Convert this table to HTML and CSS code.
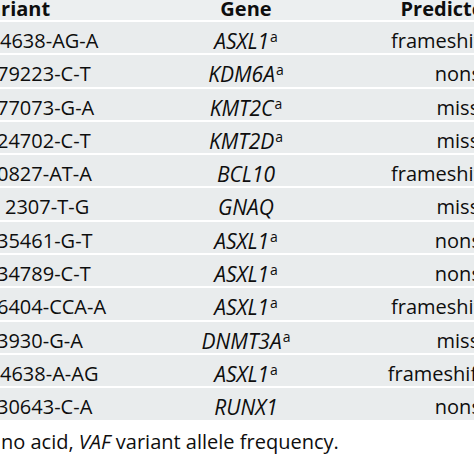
FILE: index.html
```html
<!DOCTYPE html>
<html lang="en">
<head>
<meta charset="utf-8">
<title>Variants table</title>
<link rel="stylesheet" href="styles.css">
</head>
<body>
<div class="frame">
  <div class="table">
    <div class="row head">
      <div class="c-var ind-head">Variant</div>
      <div class="c-gene">Gene</div>
      <div class="c-pred">Predicted effect</div>
    </div>
    <div class="row">
      <div class="c-var ind-0">4638-AG-A</div>
      <div class="c-gene"><i>ASXL1</i><sup>a</sup></div>
      <div class="c-pred">frameshift deletion</div>
    </div>
    <div class="row">
      <div class="c-var">79223-C-T</div>
      <div class="c-gene"><i>KDM6A</i><sup>a</sup></div>
      <div class="c-pred">nonsense</div>
    </div>
    <div class="row">
      <div class="c-var">77073-G-A</div>
      <div class="c-gene"><i>KMT2C</i><sup>a</sup></div>
      <div class="c-pred">missense</div>
    </div>
    <div class="row">
      <div class="c-var">24702-C-T</div>
      <div class="c-gene"><i>KMT2D</i><sup>a</sup></div>
      <div class="c-pred">missense</div>
    </div>
    <div class="row">
      <div class="c-var">0827-AT-A</div>
      <div class="c-gene"><i>BCL10</i></div>
      <div class="c-pred">frameshift deletion</div>
    </div>
    <div class="row">
      <div class="c-var ind-5">2307-T-G</div>
      <div class="c-gene"><i>GNAQ</i></div>
      <div class="c-pred">missense</div>
    </div>
    <div class="row">
      <div class="c-var">35461-G-T</div>
      <div class="c-gene"><i>ASXL1</i><sup>a</sup></div>
      <div class="c-pred">nonsense</div>
    </div>
    <div class="row">
      <div class="c-var">34789-C-T</div>
      <div class="c-gene"><i>ASXL1</i><sup>a</sup></div>
      <div class="c-pred">nonsense</div>
    </div>
    <div class="row">
      <div class="c-var">6404-CCA-A</div>
      <div class="c-gene"><i>ASXL1</i><sup>a</sup></div>
      <div class="c-pred">frameshift deletion</div>
    </div>
    <div class="row">
      <div class="c-var">3930-G-A</div>
      <div class="c-gene"><i>DNMT3A</i><sup>a</sup></div>
      <div class="c-pred">missense</div>
    </div>
    <div class="row">
      <div class="c-var ind-0">4638-A-AG</div>
      <div class="c-gene"><i>ASXL1</i><sup>a</sup></div>
      <div class="c-pred">frameshift insertion</div>
    </div>
    <div class="row">
      <div class="c-var">30643-C-A</div>
      <div class="c-gene"><i>RUNX1</i></div>
      <div class="c-pred">nonsense</div>
    </div>
  </div>
  <p class="note">no acid, <i>VAF</i> variant allele frequency.</p>
</div>
</body>
</html>
```

FILE: styles.css
```css
html, body {
  margin: 0;
  padding: 0;
  background: #ffffff;
  overflow: hidden;
}

.frame {
  width: 474px;
  height: 474px;
  overflow: hidden;
  font-family: "Open Sans", "Noto Sans", sans-serif;
  font-size: 20px;
  color: #0e0e0e;
}

.table {
  width: 636px;
  display: flex;
  flex-direction: column;
  gap: 2px;
}

.row {
  display: grid;
  grid-template-columns: 170px 150px 316px;
  height: 31.3px;
  box-sizing: border-box;
  padding-top: 5px;
  line-height: 28px;
  background: #e9eced;
  white-space: nowrap;
}

.row.head {
  height: 20px;
  padding-top: 0;
  line-height: 18px;
  font-weight: 700;
  background: #eceff0;
}

.c-var {
  text-align: left;
  text-indent: -3px;
}

.c-var.ind-0 { text-indent: 0; }
.c-var.ind-5 { text-indent: 5px; }
.c-var.ind-head { text-indent: -24px; }

.c-gene {
  text-align: center;
  padding-left: 2px;
}

.c-gene i {
  font-size: 21px;
}

.c-pred {
  text-align: center;
  padding-left: 4px;
}

sup {
  font-size: 14px;
  line-height: 0;
  vertical-align: 7px;
  margin-left: 1px;
}

.note {
  margin: 0;
  padding-top: 8px;
  padding-left: 1px;
  line-height: 28px;
  white-space: nowrap;
}
```
